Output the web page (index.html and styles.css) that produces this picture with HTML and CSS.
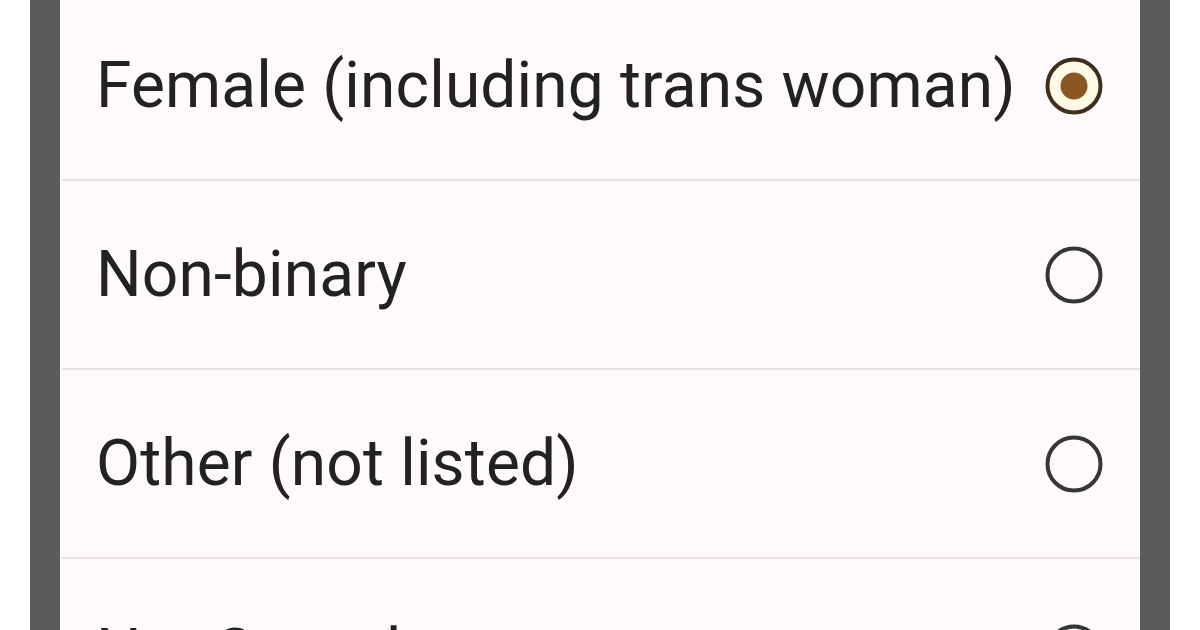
FILE: index.html
```html
<!DOCTYPE html>
<html>
<head>
<meta charset="utf-8">
<link rel="stylesheet" href="styles.css">
</head>
<body>
<div class="frame">
  <div class="edge"></div>
  <div class="bar"></div>
  <div class="sheet">
    <ul class="options">
      <li class="option">
        <span class="label">Female (including trans woman)</span>
        <svg class="radio" viewBox="0 0 58 58" width="58" height="58">
          <circle cx="29" cy="29" r="26.5" fill="#fff9e6" stroke="#3f2e1c" stroke-width="4"/>
          <circle cx="29" cy="29" r="13.5" fill="#8a5622"/>
        </svg>
      </li>
      <li class="option">
        <span class="label">Non-binary</span>
        <svg class="radio" viewBox="0 0 58 58" width="58" height="58">
          <circle cx="29" cy="29" r="26.5" fill="none" stroke="#363636" stroke-width="4"/>
        </svg>
      </li>
      <li class="option">
        <span class="label">Other (not listed)</span>
        <svg class="radio" viewBox="0 0 58 58" width="58" height="58">
          <circle cx="29" cy="29" r="26.5" fill="none" stroke="#363636" stroke-width="4"/>
        </svg>
      </li>
      <li class="option">
        <span class="label">Not Stated</span>
        <svg class="radio" viewBox="0 0 58 58" width="58" height="58">
          <circle cx="29" cy="29" r="26.5" fill="none" stroke="#363636" stroke-width="4"/>
        </svg>
      </li>
    </ul>
  </div>
  <div class="bar"></div>
  <div class="edge"></div>
</div>
</body>
</html>
```

FILE: styles.css
```css
html, body {
  margin: 0;
  padding: 0;
  background: #ffffff;
  overflow: hidden;
}

.frame {
  display: flex;
  width: 1200px;
  height: 630px;
  overflow: hidden;
}

.edge {
  width: 30px;
  flex: none;
  background: #ffffff;
}

.bar {
  width: 30px;
  flex: none;
  background: #5a5b5b;
}

.sheet {
  flex: 1;
  background: #fdf9fc;
  overflow: hidden;
}

.options {
  list-style: none;
  margin: -8px 0 0 0;
  padding: 0;
}

.option {
  display: flex;
  align-items: center;
  justify-content: space-between;
  height: 187px;
  padding: 0 37px 0 34px;
  margin-left: 2px;
  border-bottom: 2px solid #e6e2e5;
}

.label {
  font-family: Roboto, "Noto Sans", sans-serif;
  font-size: 64px;
  letter-spacing: 0.17px;
  color: #222222;
  white-space: nowrap;
}

.radio {
  display: block;
  flex: none;
}
```
